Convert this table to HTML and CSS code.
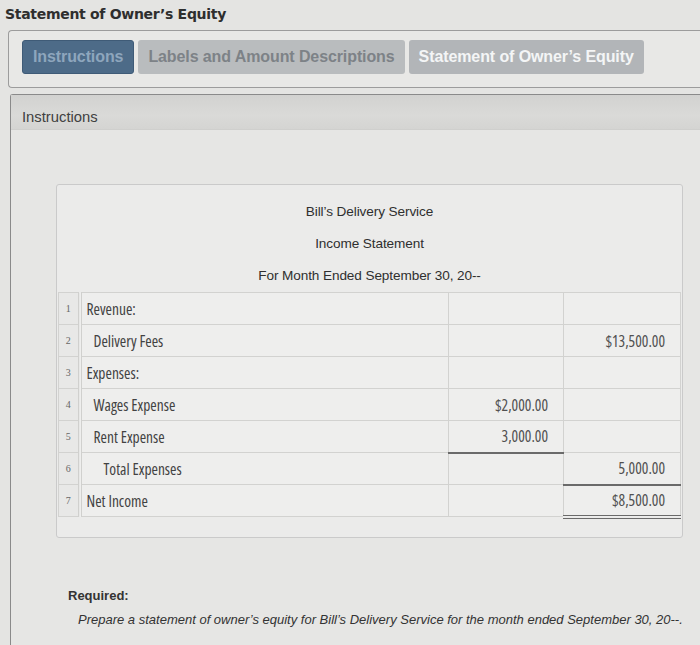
FILE: index.html
```html
<!DOCTYPE html>
<html lang="en">
<head>
<meta charset="utf-8">
<title>Statement of Owner's Equity</title>
<link rel="stylesheet" href="styles.css">
</head>
<body>
<div class="page">
  <h1 class="title">Statement of Owner’s Equity</h1>
  <nav class="tabbar">
    <div class="tab tab-active">Instructions</div>
    <div class="tab tab-muted">Labels and Amount Descriptions</div>
    <div class="tab tab-alt">Statement of Owner’s Equity</div>
  </nav>
  <section class="panel">
    <div class="panel-head">Instructions</div>
    <div class="panel-body">
      <div class="card">
        <div class="card-head">
          <div class="head-line">Bill’s Delivery Service</div>
          <div class="head-line">Income Statement</div>
          <div class="head-line">For Month Ended September 30, 20--</div>
        </div>
        <table class="sheet">
          <colgroup>
            <col class="c-num"><col class="c-label"><col class="c-amt"><col class="c-amt2">
          </colgroup>
          <tbody>
            <tr><td class="num">1</td><td class="label">Revenue:</td><td class="amt"></td><td class="amt"></td></tr>
            <tr><td class="num">2</td><td class="label ind1">Delivery Fees</td><td class="amt"></td><td class="amt">$13,500.00</td></tr>
            <tr><td class="num">3</td><td class="label">Expenses:</td><td class="amt"></td><td class="amt"></td></tr>
            <tr><td class="num">4</td><td class="label ind1">Wages Expense</td><td class="amt">$2,000.00</td><td class="amt"></td></tr>
            <tr><td class="num">5</td><td class="label ind1">Rent Expense</td><td class="amt single">3,000.00</td><td class="amt"></td></tr>
            <tr><td class="num">6</td><td class="label ind2">Total Expenses</td><td class="amt"></td><td class="amt single">5,000.00</td></tr>
            <tr><td class="num">7</td><td class="label">Net Income</td><td class="amt"></td><td class="amt double">$8,500.00</td></tr>
          </tbody>
        </table>
      </div>
      <div class="required">
        <div class="req-title">Required:</div>
        <p class="req-text">Prepare a statement of owner’s equity for Bill’s Delivery Service for the month ended September 30, 20--.</p>
      </div>
    </div>
  </section>
</div>
</body>
</html>
```

FILE: styles.css
```css
* { box-sizing: border-box; }

html, body {
  margin: 0;
  padding: 0;
  background: #e4e4e2;
}

body {
  width: 700px;
  height: 645px;
  overflow: hidden;
  font-family: "Liberation Sans", Arial, sans-serif;
  color: #3c3c3c;
}

.title {
  margin: 0;
  padding: 6px 0 0 5px;
  height: 30px;
  font-family: "DejaVu Sans", Verdana, sans-serif;
  font-weight: bold;
  font-size: 14px;
  letter-spacing: -0.3px;
  color: #2e2e2e;
}

.tabbar {
  display: flex;
  gap: 4px;
  margin-left: 8px;
  height: 58px;
  padding: 9px 0 0 13px;
  border: 1px solid #9c9c9c;
  border-right: none;
  border-radius: 4px 0 0 4px;
  background: #e8e8e6;
}

.tab {
  height: 34px;
  padding: 0 10px;
  display: flex;
  align-items: center;
  font-weight: bold;
  font-size: 16px;
  border-radius: 3px;
  letter-spacing: -0.1px;
}

.tab-active {
  background: #4d6b88;
  color: #8ea6bd;
  border: 1px solid #3f5b77;
}

.tab-muted {
  background: #b9bcbe;
  color: #7d8287;
}

.tab-alt {
  background: #b2b5b8;
  color: #f4f5f6;
}

.panel {
  display: flex;
  flex-direction: column;
  margin: 6px 0 0 10px;
  border-top: 1px solid #8a8a8a;
  border-left: 1px solid #8a8a8a;
  border-radius: 3px 0 0 0;
  height: 560px;
}

.panel-head {
  height: 35px;
  padding: 14px 0 0 11px;
  font-size: 14.8px;
  color: #404040;
  background: linear-gradient(#d2d2d0, #dadad8 60%, #d4d4d2);
  border-bottom: 1px solid #cfcfcd;
}

.panel-body {
  flex: 1;
  padding: 54px 17px 0 45px;
  background: #e6e6e4;
}

.card {
  background: #ebebea;
  border: 1px solid #cacaca;
  border-radius: 3px;
  padding: 11px 1px 18px 1px;
}

.card-head {
  display: flex;
  flex-direction: column;
  align-items: center;
}

.head-line {
  height: 32px;
  line-height: 32px;
  font-size: 13.6px;
  color: #2f2f2f;
  letter-spacing: -0.1px;
}

.sheet {
  width: 100%;
  border-collapse: collapse;
  table-layout: fixed;
  font-family: "Open Sans", sans-serif;
  font-stretch: 80%;
}

.c-num { width: 21px; }
.c-amt { width: 115px; }
.c-amt2 { width: 117px; }

.sheet td {
  height: 32px;
  padding: 0;
  border: 1px solid #d2d2d0;
  background: #eeeeed;
  font-size: 15.5px;
  color: #444;
  vertical-align: middle;
}

.sheet td.num {
  text-align: center;
  font-family: "Liberation Serif", serif;
  font-size: 10px;
  color: #666;
  background: #e8e8e7;
  border-right: 4px double #d0d0ce;
}

.sheet td.label { padding-left: 5px; color: #424242; }
.sheet td.ind1 { padding-left: 12px; }
.sheet td.ind2 { padding-left: 22px; }

.sheet td.amt {
  text-align: right;
  padding-right: 15px;
  color: #505050;
}

.sheet td.single { border-bottom: 2px solid #6a6a6a; }
.sheet td.double { border-bottom: 4px double #6a6a6a; }

.required {
  padding: 50px 0 0 12px;
}

.req-title {
  font-weight: bold;
  font-size: 13px;
  color: #333;
  line-height: 16px;
}

.req-text {
  margin: 8px 0 0 10px;
  font-style: italic;
  font-size: 13px;
  color: #333;
  line-height: 16px;
  white-space: nowrap;
}
```
